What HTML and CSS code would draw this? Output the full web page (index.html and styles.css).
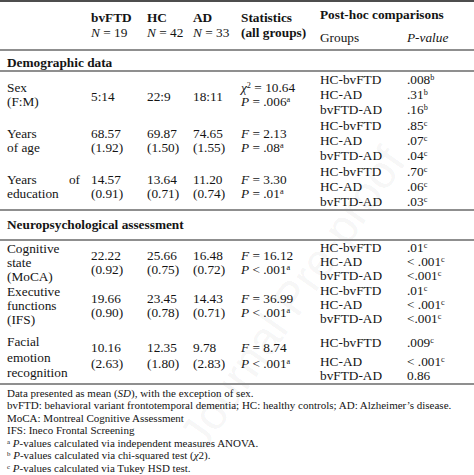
FILE: index.html
```html
<!DOCTYPE html>
<html lang="en">
<head>
<meta charset="utf-8">
<title>Table</title>
<link rel="stylesheet" href="styles.css">
</head>
<body>
<div class="page">
  <div class="wm">Journal Pre-proof</div>
  <div class="tbl">
    <div class="row head">
      <div class="lbl"></div>
      <div class="hc"><b>bvFTD</b><br><i>N</i> = 19</div>
      <div class="hc"><b>HC</b><br><i>N</i> = 42</div>
      <div class="hc"><b>AD</b><br><i>N</i> = 33</div>
      <div class="hc"><b>Statistics<br>(all groups)</b></div>
      <div class="phwrap">
        <div class="phtitle">Post-hoc comparisons</div>
        <div class="phsub"><span>Groups</span><span><i>P-value</i></span></div>
      </div>
    </div>

    <div class="section sec1">Demographic data</div>

    <div class="row r46">
      <div class="lbl">Sex<br>(F:M)</div>
      <div class="val nudge">5:14</div>
      <div class="val nudge">22:9</div>
      <div class="val nudge">18:11</div>
      <div class="val"><i>χ</i><sup>2</sup> = 10.64<br><i>P</i> = .006<sup>a</sup></div>
      <div class="ph"><div>HC-bvFTD</div><div>HC-AD</div><div>bvFTD-AD</div></div>
      <div class="ph"><div>.008<sup>b</sup></div><div>.31<sup>b</sup></div><div>.16<sup>b</sup></div></div>
    </div>

    <div class="row r46">
      <div class="lbl">Years<br>of age</div>
      <div class="val">68.57<br>(1.92)</div>
      <div class="val">69.87<br>(1.50)</div>
      <div class="val">74.65<br>(1.55)</div>
      <div class="val"><i>F</i> = 2.13<br><i>P</i> = .08<sup>a</sup></div>
      <div class="ph"><div>HC-bvFTD</div><div>HC-AD</div><div>bvFTD-AD</div></div>
      <div class="ph"><div>.85<sup>c</sup></div><div>.07<sup>c</sup></div><div>.04<sup>c</sup></div></div>
    </div>

    <div class="row r45 ruled">
      <div class="lbl">Years of education</div>
      <div class="val">14.57<br>(0.91)</div>
      <div class="val">13.64<br>(0.71)</div>
      <div class="val">11.20<br>(0.74)</div>
      <div class="val"><i>F</i> = 3.30<br><i>P</i> = .01<sup>a</sup></div>
      <div class="ph"><div>HC-bvFTD</div><div>HC-AD</div><div>bvFTD-AD</div></div>
      <div class="ph"><div>.70<sup>c</sup></div><div>.06<sup>c</sup></div><div>.03<sup>c</sup></div></div>
    </div>

    <div class="section sec2">Neuropsychological assessment</div>

    <div class="row r43">
      <div class="lbl">Cognitive<br>state<br>(MoCA)</div>
      <div class="val">22.22<br>(0.92)</div>
      <div class="val">25.66<br>(0.75)</div>
      <div class="val">16.48<br>(0.72)</div>
      <div class="val"><i>F</i> = 16.12<br><i>P</i> &lt; .001<sup>a</sup></div>
      <div class="ph ph14"><div>HC-bvFTD</div><div>HC-AD</div><div>bvFTD-AD</div></div>
      <div class="ph ph14"><div>.01<sup>c</sup></div><div>&lt; .001<sup>c</sup></div><div>&lt;.001<sup>c</sup></div></div>
    </div>

    <div class="row r43">
      <div class="lbl">Executive<br>functions<br>(IFS)</div>
      <div class="val">19.66<br>(0.90)</div>
      <div class="val">23.45<br>(0.78)</div>
      <div class="val">14.43<br>(0.71)</div>
      <div class="val"><i>F</i> = 36.99<br><i>P</i> &lt; .001<sup>a</sup></div>
      <div class="ph ph14"><div>HC-bvFTD</div><div>HC-AD</div><div>bvFTD-AD</div></div>
      <div class="ph ph14"><div>.01<sup>c</sup></div><div>&lt; .001<sup>c</sup></div><div>&lt;.001<sup>c</sup></div></div>
    </div>

    <div class="row r56 ruled">
      <div class="lbl lblf">Facial<br>emotion<br>recognition</div>
      <div class="val valf">10.16<br>(2.63)</div>
      <div class="val valf">12.35<br>(1.80)</div>
      <div class="val valf">9.78<br>(2.83)</div>
      <div class="val valf"><i>F</i> = 8.74<br><i>P</i> &lt; .001<sup>a</sup></div>
      <div class="ph phf"><div>HC-bvFTD</div><div>HC-AD</div><div>bvFTD-AD</div></div>
      <div class="ph phf"><div>.009<sup>c</sup></div><div>&lt; .001<sup>c</sup></div><div>0.86</div></div>
    </div>
  </div>

  <div class="notes">
    <div>Data presented as mean (<i>SD</i>), with the exception of sex.</div>
    <div>bvFTD: behavioral variant frontotemporal dementia; HC: healthy controls; AD: Alzheimer’s disease.</div>
    <div>MoCA: Montreal Cognitive Assessment</div>
    <div>IFS: Ineco Frontal Screening</div>
    <div><sup>a</sup> <i>P</i>-values calculated via independent measures ANOVA.</div>
    <div><sup>b</sup> <i>P</i>-values calculated via chi-squared test (<i>χ</i>2).</div>
    <div><sup>c</sup> <i>P</i>-values calculated via Tukey HSD test.</div>
  </div>
</div>
</body>
</html>
```

FILE: styles.css
```css
html, body {
  margin: 0;
  padding: 0;
  background: #ffffff;
  overflow: hidden;
}

body {
  font-family: "Liberation Serif", "Times New Roman", serif;
  font-size: 13.3px;
  color: #141414;
}

.page {
  position: relative;
  width: 474px;
  height: 475px;
}

.wm {
  position: absolute;
  left: 292px;
  top: 298px;
  transform: translate(-50%, -50%) rotate(-55deg);
  font-family: "Liberation Sans", Arial, sans-serif;
  font-size: 46px;
  color: rgba(0, 0, 0, 0.055);
  white-space: nowrap;
  z-index: 0;
}

.tbl {
  position: relative;
  z-index: 1;
  width: 474px;
  border-top: 2px solid #4d4d4d;
}

.row {
  display: grid;
  grid-template-columns: 91px 56px 46px 48px 79px 87px 1fr;
}

.row > div {
  line-height: 14px;
}

.lbl {
  padding-left: 7px;
  padding-right: 11px;
  text-align: justify;
}

sup {
  font-size: 0.62em;
  line-height: 0;
  vertical-align: 0.48em;
}

/* header */
.head {
  height: 47px;
  align-items: start;
  border-bottom: 2px solid #8f8f8f;
}

.row > .hc {
  padding-top: 8px;
  line-height: 15px;
}

.row > .phwrap {
  grid-column: 6 / 8;
  padding-top: 5px;
  line-height: 15px;
}

.phtitle {
  font-weight: bold;
}

.phsub {
  display: grid;
  grid-template-columns: 87px 1fr;
  margin-top: 8px;
}

/* section bands */
.section {
  padding-left: 7px;
  font-weight: bold;
  line-height: 15px;
  border-bottom: 2px solid #8f8f8f;
}

.sec1 {
  padding-top: 3.5px;
  height: 15.5px;
}

.sec2 {
  padding-top: 5.5px;
  height: 22.5px;
}

/* data rows */
.r46 {
  height: 46px;
  align-items: center;
}

.r45 {
  height: 45px;
  align-items: center;
}

.r43 {
  height: 43px;
  align-items: center;
}

.r56 {
  height: 56px;
  align-items: start;
}

.ruled {
  border-bottom: 2px solid #8f8f8f;
}

.row > .ph {
  align-self: start;
  line-height: 15px;
}

.row > .ph14 {
  line-height: 14px;
}

.nudge {
  margin-top: 4px;
}

.row > .lblf {
  padding-top: 7px;
  line-height: 15.5px;
}

.row > .valf {
  padding-top: 13px;
  line-height: 15.5px;
}

.row > .phf {
  padding-top: 9px;
  line-height: 14px;
}

.phf > div:first-child {
  margin-bottom: 5px;
}

/* notes */
.notes {
  position: relative;
  z-index: 1;
  padding: 1.5px 0 0 7px;
  font-size: 11px;
  line-height: 12.6px;
  white-space: nowrap;
}
```
